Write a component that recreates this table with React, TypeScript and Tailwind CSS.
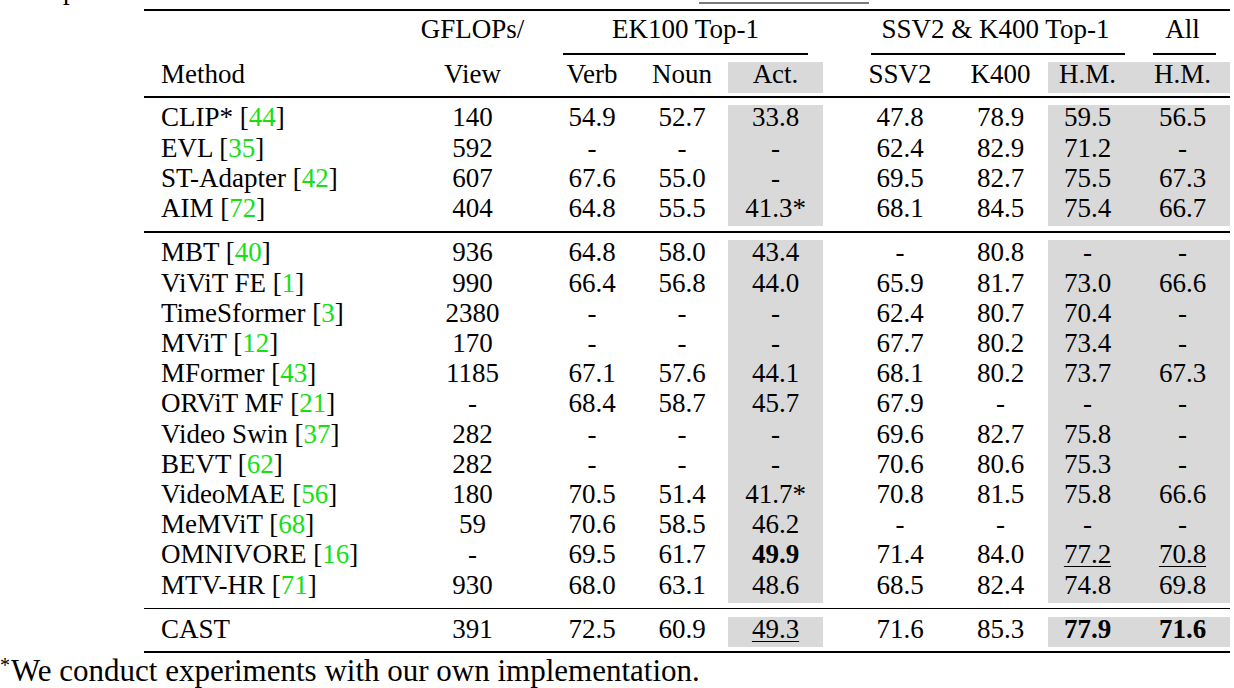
import React from "react";

type Val = string | { t: string; b?: boolean; u?: boolean };
type Row = { name: string; ref?: string; v: Val[] };

const colCls = [
  "w-[266px] pl-[17px] text-left",
  "w-[138px] pr-[13px] text-center",
  "w-[88px] text-center",
  "w-[92px] text-center",
  "w-[95px] text-center bg-[#d9d9d9]",
  "w-[122px] pl-[32px] text-center",
  "w-[103px] pl-[8px] text-center",
  "w-[87px] pr-[8px] text-center bg-[#d9d9d9]",
  "w-[95px] text-center bg-[#d9d9d9]",
];

const sec1: Row[] = [
  { name: "CLIP* ", ref: "44", v: ["140", "54.9", "52.7", "33.8", "47.8", "78.9", "59.5", "56.5"] },
  { name: "EVL ", ref: "35", v: ["592", "-", "-", "-", "62.4", "82.9", "71.2", "-"] },
  { name: "ST-Adapter ", ref: "42", v: ["607", "67.6", "55.0", "-", "69.5", "82.7", "75.5", "67.3"] },
  { name: "AIM ", ref: "72", v: ["404", "64.8", "55.5", "41.3*", "68.1", "84.5", "75.4", "66.7"] },
];

const sec2: Row[] = [
  { name: "MBT ", ref: "40", v: ["936", "64.8", "58.0", "43.4", "-", "80.8", "-", "-"] },
  { name: "ViViT FE ", ref: "1", v: ["990", "66.4", "56.8", "44.0", "65.9", "81.7", "73.0", "66.6"] },
  { name: "TimeSformer ", ref: "3", v: ["2380", "-", "-", "-", "62.4", "80.7", "70.4", "-"] },
  { name: "MViT ", ref: "12", v: ["170", "-", "-", "-", "67.7", "80.2", "73.4", "-"] },
  { name: "MFormer ", ref: "43", v: ["1185", "67.1", "57.6", "44.1", "68.1", "80.2", "73.7", "67.3"] },
  { name: "ORViT MF ", ref: "21", v: ["-", "68.4", "58.7", "45.7", "67.9", "-", "-", "-"] },
  { name: "Video Swin ", ref: "37", v: ["282", "-", "-", "-", "69.6", "82.7", "75.8", "-"] },
  { name: "BEVT ", ref: "62", v: ["282", "-", "-", "-", "70.6", "80.6", "75.3", "-"] },
  { name: "VideoMAE ", ref: "56", v: ["180", "70.5", "51.4", "41.7*", "70.8", "81.5", "75.8", "66.6"] },
  { name: "MeMViT ", ref: "68", v: ["59", "70.6", "58.5", "46.2", "-", "-", "-", "-"] },
  {
    name: "OMNIVORE ",
    ref: "16",
    v: ["-", "69.5", "61.7", { t: "49.9", b: true }, "71.4", "84.0", { t: "77.2", u: true }, { t: "70.8", u: true }],
  },
  { name: "MTV-HR ", ref: "71", v: ["930", "68.0", "63.1", "48.6", "68.5", "82.4", "74.8", "69.8"] },
];

const sec3: Row[] = [
  {
    name: "CAST",
    v: ["391", "72.5", "60.9", { t: "49.3", u: true }, "71.6", "85.3", { t: "77.9", b: true }, { t: "71.6", b: true }],
  },
];

function Cell({ v }: { v: Val }) {
  if (typeof v === "string") return <>{v}</>;
  return (
    <span
      className={
        (v.b ? "font-bold " : "") +
        (v.u ? "underline decoration-[1px] underline-offset-[3px] " : "")
      }
    >
      {v.t}
    </span>
  );
}

function DataRow({ r }: { r: Row }) {
  return (
    <div className="flex h-[30.2px] leading-[24px]">
      <div className={`${colCls[0]} shrink-0 h-full whitespace-nowrap`}>
        {r.name}
        {r.ref && (
          <>
            [<span className="text-[#14e014]">{r.ref}</span>]
          </>
        )}
      </div>
      {r.v.map((v, i) => (
        <div key={i} className={`${colCls[i + 1]} shrink-0 h-full whitespace-nowrap`}>
          <Cell v={v} />
        </div>
      ))}
    </div>
  );
}

export default function App() {
  return (
    <div className="w-[1234px] h-[688px] bg-white overflow-hidden text-black font-['Liberation_Serif','Times_New_Roman',serif] text-[27px]">
      {/* fragments of content above */}
      <div className="h-[9px] overflow-hidden flex items-start">
        <div className="ml-[63px] w-[20px] leading-[24px] -mt-[22px]">p</div>
        <div className="ml-[616px] mt-[2px] w-[170px] h-[2px] bg-[#7a7a7a]"></div>
      </div>

      <div className="ml-[144px] w-[1086px]">
        {/* top rule */}
        <div className="h-[2px] bg-black"></div>

        {/* header row 1 */}
        <div className="mt-[6px] flex h-[30.2px] leading-[24px]">
          <div className="w-[266px] shrink-0"></div>
          <div className="w-[138px] pr-[13px] shrink-0 text-center">GFLOPs/</div>
          <div className="w-[275px] shrink-0 text-center whitespace-nowrap">EK100 Top-1</div>
          <div className="w-[33px] shrink-0"></div>
          <div className="w-[279px] shrink-0 text-center whitespace-nowrap">SSV2 &amp; K400 Top-1</div>
          <div className="w-[95px] shrink-0 text-center">All</div>
        </div>

        {/* cmidrules */}
        <div className="mt-[6.3px] flex h-[1.2px]">
          <div className="w-[419px] shrink-0"></div>
          <div className="w-[245px] shrink-0 bg-black"></div>
          <div className="w-[63px] shrink-0"></div>
          <div className="w-[254px] shrink-0 bg-black"></div>
          <div className="w-[28px] shrink-0"></div>
          <div className="w-[63px] shrink-0 bg-black"></div>
          <div className="w-[14px] shrink-0"></div>
        </div>

        {/* header row 2 */}
        <div className="mt-[7.8px] flex h-[30.2px] leading-[24px]">
          <div className={`${colCls[0]} shrink-0 h-full`}>Method</div>
          <div className={`${colCls[1]} shrink-0 h-full`}>View</div>
          <div className={`${colCls[2]} shrink-0 h-full`}>Verb</div>
          <div className={`${colCls[3]} shrink-0 h-full`}>Noun</div>
          <div className={`${colCls[4]} shrink-0 h-full`}>Act.</div>
          <div className={`${colCls[5]} shrink-0 h-full`}>SSV2</div>
          <div className={`${colCls[6]} shrink-0 h-full`}>K400</div>
          <div className={`${colCls[7]} shrink-0 h-full`}>H.M.</div>
          <div className={`${colCls[8]} shrink-0 h-full`}>H.M.</div>
        </div>

        <div className="mt-[3.8px] h-[1.4px] bg-black"></div>

        <div className="mt-[7.5px]">
          {sec1.map((r) => (
            <DataRow key={r.name} r={r} />
          ))}
        </div>

        <div className="mt-[5.2px] h-[1.4px] bg-black"></div>

        <div className="mt-[7.8px]">
          {sec2.map((r) => (
            <DataRow key={r.name} r={r} />
          ))}
        </div>

        <div className="mt-[5.2px] h-[1.4px] bg-black"></div>

        <div className="mt-[7.3px]">
          {sec3.map((r) => (
            <DataRow key={r.name} r={r} />
          ))}
        </div>

        <div className="mt-[4.6px] h-[2px] bg-black"></div>
      </div>

      {/* footnote */}
      <div className="mt-[4px] flex leading-[28px] whitespace-nowrap text-[31px]">
        <span className="text-[20px] leading-[16px] pr-[1px]">*</span>
        <span>We conduct experiments with our own implementation.</span>
      </div>
    </div>
  );
}
